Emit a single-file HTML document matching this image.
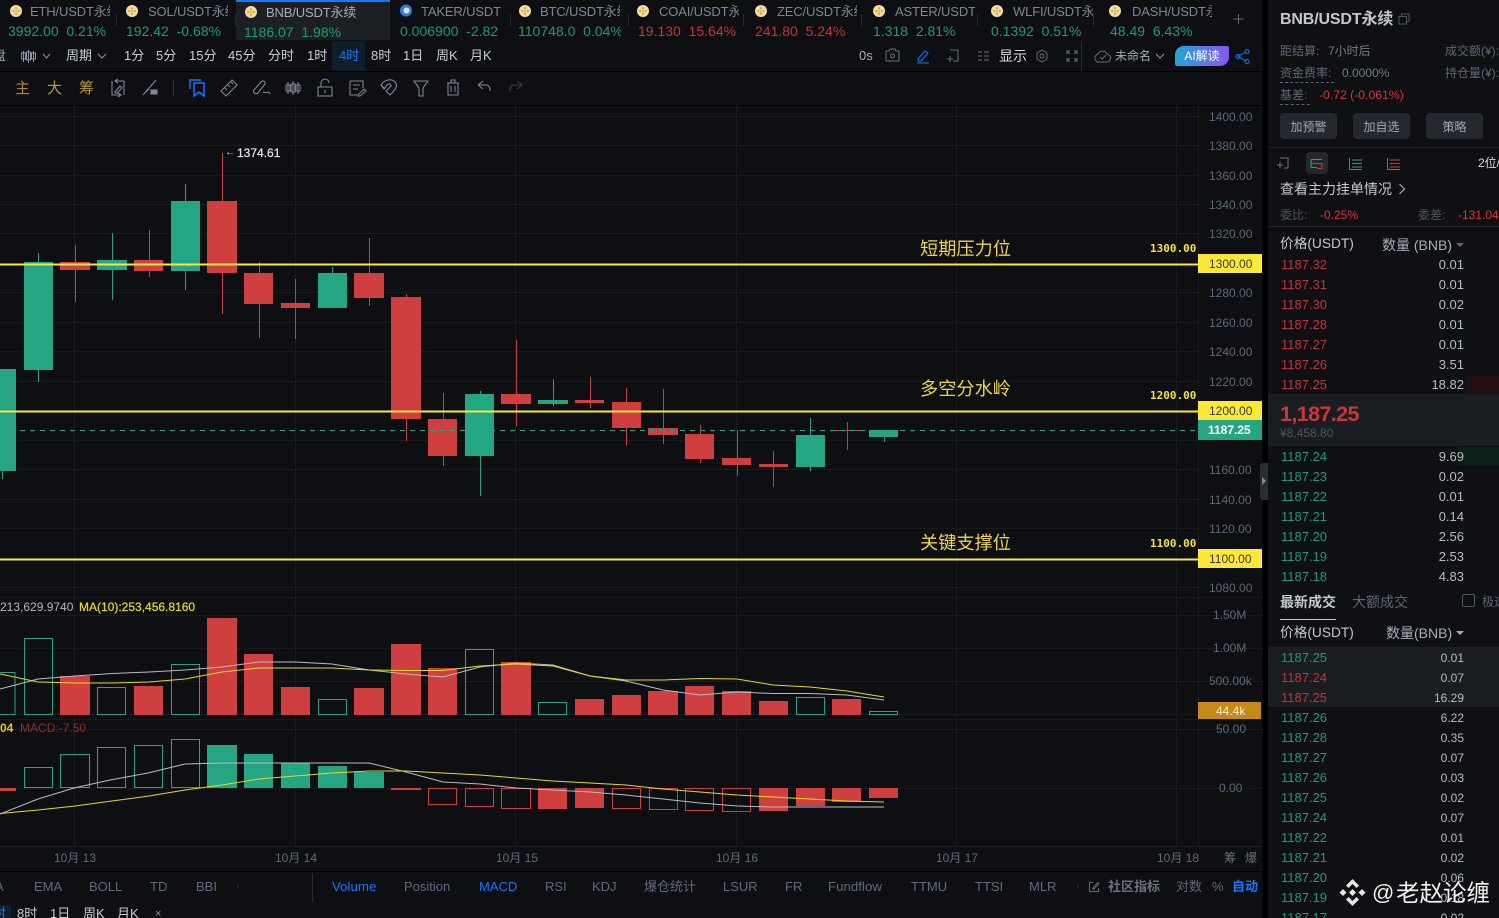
<!DOCTYPE html>
<html><head><meta charset="utf-8"><style>
html,body{margin:0;padding:0;background:#0d0f12;width:1499px;height:918px;overflow:hidden}
body{position:relative;font-family:"Liberation Sans","Noto Sans CJK SC",sans-serif;font-size:13px;color:#8a94a3}
.a{position:absolute}
.t{position:absolute;white-space:nowrap;line-height:20px;height:20px}
.c{overflow:hidden}
.g{color:#1d9a76}.r{color:#c0353a}.b{color:#1677ff}.w{color:#c9ced6}
.n{color:#8c96a6}
.v{font-size:14px}
.k{letter-spacing:-.15px}
.ax{position:absolute;left:1209px;color:#5d6778;font-size:12px;line-height:16px;white-space:nowrap}
.as div,.bi div,.tr div{position:absolute;left:1281px;font-size:13px;line-height:20px;white-space:nowrap}
.as b,.bi b,.tr b{position:absolute;font-weight:400;right:35px;font-size:13px;line-height:20px;color:#b5bcc6}
.tl{color:#5f6a7b;font-size:13px}
.lb{position:absolute;left:1198px;width:64px;height:19px;background:#fde83a;color:#3a3a30;font-size:12px;line-height:21px;padding-left:11px;box-sizing:border-box;overflow:hidden}
.btn{position:absolute;top:113px;width:57px;height:26px;background:#25282e;border-radius:4px;color:#a2a9b4;font-size:12px;line-height:28px;text-align:center}
.mono{position:absolute;left:1150px;white-space:nowrap;font:700 11px/20px "DejaVu Sans Mono",monospace;color:#f3e23c}
.note{position:absolute;left:920px;white-space:nowrap;font-size:18.200px;line-height:24px;height:24px;color:#f0d43c}
</style></head><body>
<svg width="0" height="0" style="position:absolute"><defs>
<symbol id="coin" viewBox="0 0 12 12"><circle cx="6" cy="6" r="6" fill="#efdcb0"/><path d="M6 1.800 7.400 3.200 6 4.600 4.600 3.200ZM3.200 4.600 4.600 6 3.200 7.400 1.800 6ZM8.800 4.600 10.200 6 8.800 7.400 7.400 6ZM6 7.400 7.400 8.800 6 10.200 4.600 8.800ZM6 4.900 7.100 6 6 7.100 4.900 6Z" fill="#e8a320"/></symbol>
</defs></svg>

<!-- tab strip -->
<div class="a" style="left:236px;top:0;width:154px;height:40px;background:#1c1f24;border-top:2px solid #1677ff;box-sizing:border-box"></div>
<div class="a" style="left:0;top:71px;width:1263px;height:1px;background:#000"></div>
<div class="a" style="left:0;top:105px;width:1263px;height:1px;background:#000"></div>
<svg class="a" style="left:0;top:0" width="1263" height="42">
<g stroke="#25282d"><path d="M116.500 14V26M235.500 14V26M510.500 14V26M628.500 14V26M743.500 14V26M861.500 14V26M977.500 14V26M1093.500 14V26"/></g>
<use href="#coin" x="10" y="5" width="12" height="12"/><use href="#coin" x="126" y="5" width="12" height="12"/><use href="#coin" x="245" y="6" width="12" height="12"/>
<circle cx="406" cy="10.500" r="6" fill="#2a7de1"/><circle cx="406.500" cy="10.500" r="3" fill="#dfe6ee"/>
<use href="#coin" x="519" y="5" width="12" height="12"/><use href="#coin" x="637" y="5" width="12" height="12"/><use href="#coin" x="755" y="5" width="12" height="12"/><use href="#coin" x="873" y="5" width="12" height="12"/><use href="#coin" x="991" y="5" width="12" height="12"/><use href="#coin" x="1109" y="5" width="12" height="12"/>
<path d="M1233.500 19H1243.500M1238.500 14V24" stroke="#5f6775" stroke-width="1"/>
</svg>
<div class="t c k" style="left:30px;top:2px;width:80px;color:#7d8695">ETH/USDT永续</div>
<div class="t c k" style="left:148px;top:2px;width:80px;color:#7d8695">SOL/USDT永续</div>
<div class="t c k" style="left:266px;top:3px;width:110px;color:#a7aeb9">BNB/USDT永续</div>
<div class="t c k" style="left:421px;top:2px;width:82px;color:#7d8695">TAKER/USDT</div>
<div class="t c k" style="left:540px;top:2px;width:80px;color:#7d8695">BTC/USDT永续</div>
<div class="t c k" style="left:659px;top:2px;width:80px;color:#7d8695">COAI/USDT永续</div>
<div class="t c k" style="left:777px;top:2px;width:80px;color:#7d8695">ZEC/USDT永续</div>
<div class="t c k" style="left:895px;top:2px;width:80px;color:#7d8695">ASTER/USDT</div>
<div class="t c k" style="left:1013px;top:2px;width:80px;color:#7d8695">WLFI/USDT永续</div>
<div class="t c k" style="left:1132px;top:2px;width:80px;color:#7d8695">DASH/USDT永续</div>
<div class="t c g v" style="left:8px;top:21px;width:104px">3992.00&nbsp; 0.21%</div>
<div class="t c g v" style="left:126px;top:21px;width:104px">192.42&nbsp; -0.68%</div>
<div class="t c g v" style="left:244px;top:22px;width:120px">1186.07&nbsp; 1.98%</div>
<div class="t c g v" style="left:400px;top:21px;width:104px">0.006900&nbsp; -2.82</div>
<div class="t c g v" style="left:518px;top:21px;width:103px">110748.0&nbsp; 0.04%</div>
<div class="t c r v" style="left:638px;top:21px;width:104px">19.130&nbsp; 15.64%</div>
<div class="t c r v" style="left:755px;top:21px;width:104px">241.80&nbsp; 5.24%</div>
<div class="t c g v" style="left:873px;top:21px;width:104px">1.318&nbsp; 2.81%</div>
<div class="t c g v" style="left:991px;top:21px;width:104px">0.1392&nbsp; 0.51%</div>
<div class="t c g v" style="left:1110px;top:21px;width:104px">48.49&nbsp; 6.43%</div>

<!-- row 2 -->
<div class="a" style="left:332px;top:41px;width:33px;height:30px;background:#0f1e2c"></div>
<div class="t" style="left:-7px;top:46px;color:#9aa3b0">盘</div>
<div class="t w" style="left:66px;top:46px">周期</div>
<div class="t w" style="left:124px;top:46px">1分</div>
<div class="t w" style="left:156px;top:46px">5分</div>
<div class="t w" style="left:189px;top:46px">15分</div>
<div class="t w" style="left:228px;top:46px">45分</div>
<div class="t w" style="left:268px;top:46px">分时</div>
<div class="t w" style="left:307px;top:46px">1时</div>
<div class="t b" style="left:339px;top:46px">4时</div>
<div class="t w" style="left:371px;top:46px">8时</div>
<div class="t w" style="left:403px;top:46px">1日</div>
<div class="t w" style="left:436px;top:46px">周K</div>
<div class="t w" style="left:470px;top:46px">月K</div>
<div class="t" style="left:859px;top:46px;color:#a7aeb9">0s</div>
<div class="t" style="left:999px;top:46px;color:#d8dce2;font-size:14px">显示</div>
<div class="t" style="left:1115px;top:46px;font-size:12px;color:#a7aeb9">未命名</div>
<div class="a" style="left:1081px;top:41px;width:1px;height:30px;background:#2a2d33"></div>
<div class="a" style="left:1175px;top:46px;width:54px;height:20px;border-radius:9px 2px 9px 2px;background:linear-gradient(90deg,#1ea7d8,#8a56ef);color:#fff;font-size:12px;line-height:20px;text-align:center">AI解读</div>
<svg class="a" style="left:0;top:41px" width="1263" height="31" fill="none" stroke="#656e7c" stroke-width="1">
<path stroke="#8a94a3" d="M23.500 10V21M21.500 12H25.500V18H21.500ZM28.500 9V22M26.500 11H30.500V19H26.500ZM33.500 10V21M31.500 12H35.500V18H31.500Z"/>
<path stroke="#8a94a3" d="M43 13 46.500 17 50 13M98 13 102 17 106 13M1156 13 1160 17 1164 13"/>
<path d="M886 10H889L890 8H895L896 10H899V20H886ZM890.500 15A2 2 0 1 0 894.500 15A2 2 0 1 0 890.500 15Z"/>
<path stroke="#1677ff" d="M918 18 925 10 928 12 921 20H918ZM917 22H929"/>
<path d="M950 9H958V20H953M947 18H953M950 15V21"/>
<path d="M978 11H982M978 15H982M978 19H982M984 11H989M984 15H989M984 19H989"/>
<path d="M1042 9 1047 12V18L1042 21 1037 18V12ZM1040 15A2 2 0 1 0 1044 15A2 2 0 1 0 1040 15Z"/>
<path d="M1067 13V10H1070M1074 10H1077V13M1077 17V20H1074M1070 20H1067V17M1067 10 1070 13M1077 10 1074 13M1077 20 1074 17M1067 20 1070 17"/>
<path d="M1100 21H1106A4 4 0 0 0 1107 13 5 5 0 0 0 1098 13 4 4 0 0 0 1100 21ZM1100 16 1102 18 1106 14"/>
<path stroke="#1677ff" d="M1238 15.500 1246 11M1238 15.500 1246 20"/><circle cx="1238" cy="15.500" r="2" stroke="#1677ff"/><circle cx="1247" cy="10.500" r="2" stroke="#1677ff"/><circle cx="1247" cy="20.500" r="2" stroke="#1677ff"/>
</svg>

<!-- row 3 -->
<div class="t" style="left:15px;top:79px;font-size:15px;color:#b0892a">主</div>
<div class="t" style="left:47px;top:79px;font-size:15px;color:#c09a3c">大</div>
<div class="t" style="left:79px;top:79px;font-size:15px;color:#b89834">筹</div>
<svg class="a" style="left:0;top:72px" width="540" height="33" fill="none" stroke="#7e8796" stroke-width="1.100">
<path d="M115 9H124V23M121 23H112V9M118 7 115 9 118 11M118 25 121 23 118 21M115 20 120 14 122 16 117 21H115Z"/>
<path d="M143 23 156 8M146 20 149 17"/><path d="M151 18H157V22H151Z" fill="#7e8796"/>
<path d="M173.500 8V24" stroke="#2a2d33"/>
<path stroke="#1677ff" stroke-width="1.500" d="M190 17V8H201M194 11H204V24L199 20 194 24Z"/>
<path d="M221 19 232 8 237 13 226 24ZM225 16 227 18M228 13 230 15M231 10 233 12"/>
<path d="M254 18 261 10C263 8 266 10 265 12L258 21C256 23 252 20 254 18ZM263 20C266 22 268 18 270 22"/>
<path d="M288 10V22M286 13H290V19H286ZM293 9V23M291 12H295V20H291ZM298 10V22M296 13H300V19H296Z"/>
<path d="M318 15H332V24H318ZM321 15V11A4 4 0 0 1 329 11M325 18V21"/>
<path d="M350 9H363V16M350 9V23H357M353 13H360M353 17H358M358 23 364 17 366 19 360 24H358Z"/>
<path d="M381 13C384 8 391 6 395 10S394 19 390 23L386 19 391 14C391 12 389 11 387 13L384 17ZM381 13 385 17"/>
<path d="M414 9H428L423 16V24H419V16Z"/>
<path d="M447 11H459M451 11V8H455V11M448 11V23H458V11M451 14V20M455 14V20"/>
<path d="M478 13 483 9M478 13 483 17M478 13H486C489 13 490 16 490 19"/>
<path stroke="#3a3e45" d="M522 13 517 9M522 13 517 17M522 13H514C511 13 510 16 510 19"/>
</svg>

<!-- main chart -->
<svg class="a" style="left:0;top:0" width="1263" height="872">
<g stroke="#191b1f" stroke-width="1">
<path d="M0 116.500H1198M0 145.500H1198M0 175.500H1198M0 204.500H1198M0 233.500H1198M0 292.500H1198M0 322.500H1198M0 351.500H1198M0 381.500H1198M0 440.500H1198M0 469.500H1198M0 499.500H1198M0 528.500H1198M0 587.500H1198"/>
<path d="M0 615.500H1262M0 648.500H1262M0 681.500H1262M0 714.500H1262M0 729.500H1262M0 788.500H1262"/>
<path d="M74.500 105V846M295.500 105V846M515.500 105V846M736.500 105V846M956.500 105V846M1176.500 105V846M1198.500 105V846"/>
</g>
<path d="M0 597.500H1262M0 719.500H1262" stroke="#17191d"/>
<path d="M0 846.500H1262" stroke="#1c1f24"/>
<g stroke-width="1">
<g stroke="#26a584" fill="#26a584">
<path d="M2.500 369V479M38.500 253V382M112.500 233V300M185.500 184V290M332.500 267V308M480.500 391V496M553.500 379V406M810.500 418V471M884.500 430V442"/>
</g>
<path d="M75.500 245V302M149.500 230V277M222.500 153V314M259.500 262V338M295.500 279V339M369.500 238V306M406.500 294V441M443.500 393V466M516.500 340V426M590.500 377V408M626.500 388V446M663.500 389V444M700.500 425V463M737.500 430V476M773.500 451V487M847.500 422V450" stroke="#c9403f"/>
</g>
<g fill="#26a584">
<rect x="-12" y="369" width="28" height="102"/><rect x="24" y="262" width="29" height="108"/><rect x="97" y="260" width="30" height="10"/><rect x="171" y="201" width="29" height="70"/><rect x="318" y="273" width="29" height="35"/><rect x="465" y="394" width="29" height="62"/><rect x="538" y="400" width="30" height="4"/><rect x="796" y="435" width="29" height="32"/><rect x="869" y="430" width="29" height="7"/>
</g>
<g fill="#cf3f3f">
<rect x="60" y="262" width="30" height="8"/><rect x="134" y="260" width="29" height="11"/><rect x="207" y="201" width="30" height="72"/><rect x="244" y="273" width="29" height="31"/><rect x="281" y="303" width="29" height="5"/><rect x="354" y="273" width="30" height="25"/><rect x="391" y="297" width="30" height="122"/><rect x="428" y="419" width="29" height="37"/><rect x="501" y="394" width="30" height="10"/><rect x="575" y="400" width="29" height="3"/><rect x="612" y="402" width="29" height="26"/><rect x="648" y="428" width="30" height="7"/><rect x="685" y="434" width="29" height="25"/><rect x="722" y="458" width="29" height="7"/><rect x="759" y="464" width="29" height="3"/><rect x="832" y="430" width="29" height="1"/>
</g>
<path d="M0 430.500H1198" stroke="#26a584" stroke-dasharray="5 5"/>
<path d="M0 264.500H1198M0 411.500H1198M0 559.500H1198" stroke="#f6e648" stroke-width="2"/>
<g fill="none" stroke="#26a584" stroke-width="1">
<rect x="-10" y="672.500" width="25" height="42"/><rect x="24.500" y="638.500" width="28" height="76"/><rect x="97.500" y="687.500" width="28" height="27"/><rect x="171.500" y="664.500" width="28" height="50"/><rect x="318.500" y="699.500" width="28" height="15"/><rect x="465.500" y="649.500" width="28" height="65"/><rect x="538.500" y="702.500" width="28" height="12"/><rect x="796.500" y="697.500" width="28" height="17"/><rect x="869.500" y="711.500" width="28" height="3"/>
</g>
<g fill="#cf3f3f">
<rect x="60" y="676" width="30" height="39"/><rect x="134" y="686" width="29" height="29"/><rect x="207" y="618" width="30" height="97"/><rect x="244" y="654" width="29" height="61"/><rect x="281" y="687" width="29" height="28"/><rect x="354" y="688" width="30" height="27"/><rect x="391" y="644" width="30" height="71"/><rect x="428" y="668" width="29" height="47"/><rect x="501" y="662" width="30" height="53"/><rect x="575" y="699" width="29" height="16"/><rect x="612" y="695" width="29" height="20"/><rect x="648" y="691" width="30" height="24"/><rect x="685" y="686" width="29" height="29"/><rect x="722" y="691" width="29" height="24"/><rect x="759" y="701" width="29" height="14"/><rect x="832" y="699" width="29" height="16"/>
</g>
<polyline fill="none" stroke="#b9bcc2" stroke-width="1" points="0,689 38,679 75,676 112,673.500 149,672 185,670 222,667 259,662 295,662 332,664 369,670 406,674 443,677 480,667 516,663 553,665 590,676 626,681 663,690 700,695 737,692 773,693.500 810,693.500 847,695 884,700"/>
<polyline fill="none" stroke="#e8d820" stroke-width="1" points="0,674 38,682 75,683 112,683 149,682 185,679 222,672 259,668 295,668 332,668 369,670 406,670.500 443,670.500 480,666 516,664 553,666 590,676 626,680 663,680 700,678.500 737,679 773,685 810,687 847,691 884,697"/>
<rect x="-10" y="788" width="26" height="3" fill="#cf3f3f"/>
<g fill="none" stroke="#26a584">
<rect x="24.500" y="767.500" width="28" height="20"/><rect x="60.500" y="754.500" width="29" height="33"/><rect x="97.500" y="747.500" width="28" height="40"/><rect x="134.500" y="745.500" width="28" height="42"/><rect x="171.500" y="739.500" width="28" height="48"/>
</g>
<g fill="#26a584">
<rect x="207" y="745" width="30" height="43"/><rect x="244" y="754" width="29" height="34"/><rect x="281" y="763" width="29" height="25"/><rect x="318" y="766" width="29" height="22"/><rect x="354" y="772" width="30" height="16"/>
</g>
<g fill="none" stroke="#cf3f3f">
<rect x="428.500" y="788.500" width="28" height="16"/><rect x="465.500" y="788.500" width="28" height="18"/><rect x="501.500" y="788.500" width="29" height="20"/><rect x="612.500" y="788.500" width="28" height="20"/><rect x="649.500" y="788.500" width="28" height="21"/><rect x="685.500" y="788.500" width="28" height="22"/><rect x="722.500" y="788.500" width="28" height="23"/>
</g>
<g fill="#cf3f3f">
<rect x="391" y="788" width="30" height="2"/><rect x="538" y="788" width="29" height="21"/><rect x="575" y="788" width="29" height="20"/><rect x="759" y="788" width="29" height="23"/><rect x="796" y="788" width="29" height="18"/><rect x="832" y="788" width="29" height="14"/><rect x="869" y="788" width="29" height="10"/>
</g>
<polyline fill="none" stroke="#b9bcc2" points="0,814 38,799 74,788 110,780 148,773 185,764 222,763 259,763 295,763 332,763 369,763 406,772 443,782 480,784 516,788 553,790 590,792 626,795 663,799 700,803 737,806 773,807 810,807 847,807 884,807"/>
<polyline fill="none" stroke="#e8d820" points="0,813.500 38,810 75,806 112,801 149,796 185,790 222,785 259,779 295,776 332,773 369,771 406,771 443,773 480,775 516,778 553,781 590,783 626,785 663,789 700,792 737,795 773,797 810,799 847,801 884,802"/>
</svg>

<div class="note" style="top:237px">短期压力位</div>
<div class="note" style="top:377px">多空分水岭</div>
<div class="note" style="top:531px">关键支撑位</div>
<div class="mono" style="top:239px">1300.00</div>
<div class="mono" style="top:386px">1200.00</div>
<div class="mono" style="top:534px">1100.00</div>
<div class="t" style="left:225px;top:143px;font-size:10px;color:#d7dae0">←</div>
<div class="t" style="left:237px;top:143px;font-size:12px;color:#e2e5ea;-webkit-text-stroke:.25px #e2e5ea">1374.61</div>

<!-- price axis -->
<div class="ax" style="top:109px">1400.00</div><div class="ax" style="top:138px">1380.00</div><div class="ax" style="top:168px">1360.00</div><div class="ax" style="top:197px">1340.00</div><div class="ax" style="top:226px">1320.00</div><div class="ax" style="top:285px">1280.00</div><div class="ax" style="top:315px">1260.00</div><div class="ax" style="top:344px">1240.00</div><div class="ax" style="top:374px">1220.00</div><div class="ax" style="top:462px">1160.00</div><div class="ax" style="top:492px">1140.00</div><div class="ax" style="top:521px">1120.00</div><div class="ax" style="top:580px">1080.00</div>
<div class="ax" style="left:1213px;top:607px">1.50M</div><div class="ax" style="left:1213px;top:640px">1.00M</div><div class="ax" style="left:1209px;top:673px">500.00k</div><div class="ax" style="left:1216px;top:721px">50.00</div><div class="ax" style="left:1219px;top:780px">0.00</div>
<div class="lb" style="top:254px">1300.00</div>
<div class="lb" style="top:401px">1200.00</div>
<div class="lb" style="top:549px">1100.00</div>
<div class="a" style="left:1198px;top:420px;width:64px;height:20px;background:#26a584;color:#fff;font-size:12px;font-weight:700;line-height:20px;padding-left:10px;box-sizing:border-box">1187.25</div>
<div class="a" style="left:1198px;top:702px;width:63px;height:17px;background:#c88a16;color:#f5f0dc;font-size:12px;line-height:18px;padding-left:18px;box-sizing:border-box">44.4k</div>

<div class="t" style="left:0;top:597px;font-size:12px;color:#b3b8c0">213,629.9740</div>
<div class="t" style="left:79px;top:597px;font-size:12px;color:#e6d61e;-webkit-text-stroke:.25px #e6d61e">MA(10):253,456.8160</div>
<div class="t" style="left:0;top:718px;font-size:12px"><span style="color:#e6c81e;font-weight:700">04</span>&nbsp; <span style="color:#8c2f2f">MACD:-7.50</span></div>

<!-- x axis -->
<div class="t tl" style="left:54px;top:848px;font-size:12px">10月 13</div>
<div class="t tl" style="left:275px;top:848px;font-size:12px">10月 14</div>
<div class="t tl" style="left:496px;top:848px;font-size:12px">10月 15</div>
<div class="t tl" style="left:716px;top:848px;font-size:12px">10月 16</div>
<div class="t tl" style="left:936px;top:848px;font-size:12px">10月 17</div>
<div class="t tl" style="left:1157px;top:848px;font-size:12px">10月 18</div>
<div class="t" style="left:1224px;top:848px;font-size:12px;color:#666f7c">筹</div>
<div class="t" style="left:1245px;top:848px;font-size:12px;color:#666f7c">爆</div>

<!-- indicator row -->
<div class="a" style="left:0;top:871px;width:1263px;height:1px;background:#000"></div>
<div class="a" style="left:312px;top:873px;width:1px;height:29px;background:#2a2d33"></div>
<div class="t tl" style="left:-5px;top:877px">A</div><div class="t tl" style="left:34px;top:877px">EMA</div><div class="t tl" style="left:89px;top:877px">BOLL</div><div class="t tl" style="left:150px;top:877px">TD</div><div class="t tl" style="left:196px;top:877px">BBI</div><div class="t" style="left:236px;top:877px;color:#3a3e45;font-size:10px">›</div>
<div class="t b" style="left:332px;top:877px;font-size:13.300px">Volume</div><div class="t tl" style="left:404px;top:877px">Position</div><div class="t b" style="left:479px;top:877px">MACD</div><div class="t tl" style="left:545px;top:877px">RSI</div><div class="t tl" style="left:592px;top:877px">KDJ</div><div class="t tl" style="left:644px;top:877px">爆仓统计</div><div class="t tl" style="left:723px;top:877px">LSUR</div><div class="t tl" style="left:785px;top:877px">FR</div><div class="t tl" style="left:828px;top:877px;font-size:13.300px">Fundflow</div><div class="t tl" style="left:911px;top:877px">TTMU</div><div class="t tl" style="left:975px;top:877px">TTSI</div><div class="t tl" style="left:1029px;top:877px">MLR</div><div class="t" style="left:1076px;top:877px;color:#3a3e45;font-size:10px">›</div>
<svg class="a" style="left:1088px;top:881px" width="12" height="12" fill="none" stroke="#5f6a7b"><path d="M5 1.500H1.500V10.500H10.500V7M4.500 7.500 10 1.500 11 2.500 5.500 8.500Z"/></svg>
<div class="t" style="left:1108px;top:877px;color:#68727f;font-weight:700;font-size:13px">社区指标</div>
<div class="t tl" style="left:1176px;top:877px">对数</div><div class="t tl" style="left:1212px;top:877px">%</div><div class="t b" style="left:1232px;top:877px;font-weight:700;font-size:13px">自动</div>
<div class="a" style="left:0;top:905px;width:11px;height:13px;background:#0f1e2c"></div>
<div class="t b" style="left:-7px;top:904px;font-size:13px">时</div>
<div class="t w" style="left:17px;top:904px">8时</div><div class="t w" style="left:50px;top:904px">1日</div><div class="t w" style="left:83px;top:904px">周K</div><div class="t w" style="left:117px;top:904px">月K</div><div class="t n" style="left:155px;top:904px;font-size:11px">×</div>

<!-- divider + panel -->
<div class="a" style="left:1263px;top:0;width:5px;height:918px;background:#000"></div>
<div class="a" style="left:1260px;top:463px;width:8px;height:37px;background:#2a2d33;border-radius:3px 0 0 3px"></div>
<svg class="a" style="left:1261px;top:476px" width="6" height="10"><path d="M1 1 5 5 1 9Z" fill="#7e8796"/></svg>
<div class="a" style="left:1268px;top:0;width:231px;height:918px;background:#0e1013"></div>
<div class="t" style="left:1280px;top:10px;font-size:16px;font-weight:700;color:#c3c8d0;letter-spacing:-.15px">BNB/USDT永续</div>
<svg class="a" style="left:1398px;top:13px" width="12" height="12" fill="none" stroke="#4c525c"><path d="M1 3.500H8.500V11H1ZM3.500 3V1H11V8.500H9"/></svg>
<div class="t" style="left:1280px;top:41px;font-size:12px;color:#5f6775">距结算:</div>
<div class="t" style="left:1328px;top:41px;font-size:12px;color:#6f7987">7小时后</div>
<div class="t" style="left:1445px;top:41px;font-size:12px;color:#5f6775">成交额(¥):</div>
<div class="t" style="left:1280px;top:63px;font-size:12px;color:#5f6775">资金费率:</div>
<div class="t" style="left:1342px;top:63px;font-size:12px;color:#6f7987">0.0000%</div>
<div class="t" style="left:1445px;top:63px;font-size:12px;color:#5f6775">持仓量(¥):</div>
<div class="a" style="left:1280px;top:82px;width:54px;border-top:1px dashed #5f6775"></div>
<div class="t" style="left:1280px;top:85px;font-size:12px;color:#5f6775">基差:</div>
<div class="t" style="left:1319px;top:85px;font-size:12.200px;color:#d8343a">-0.72 (-0.061%)</div>
<div class="a" style="left:1280px;top:104px;width:30px;border-top:1px dashed #5f6775"></div>
<div class="btn" style="left:1280px">加预警</div>
<div class="btn" style="left:1353px">加自选</div>
<div class="btn" style="left:1426px">策略</div>
<div class="a" style="left:1268px;top:147px;width:231px;height:1px;background:#24272c"></div>
<div class="a" style="left:1306px;top:152px;width:22px;height:22px;background:#25282e;border-radius:4px"></div>
<svg class="a" style="left:1268px;top:152px" width="140" height="22" fill="none" stroke-width="1">
<path stroke="#6b7280" d="M12 6H20V16H16M9 13H15M12 10V16"/>
<path stroke="#26a584" d="M43 7.500H54M43 15.500H49M43 7.500V15.500"/><path stroke="#d8343a" d="M43 11.500H54M49 16.500H54V11.500"/>
<path stroke="#6b7280" d="M81.500 6V17.500H94"/><path stroke="#26a584" d="M84 8H94M84 11.500H94M84 15H94"/>
<path stroke="#6b7280" d="M119.500 6V17.500H132"/><path stroke="#d8343a" d="M122 8H132M122 11.500H132M122 15H132"/>
</svg>
<div class="t" style="left:1478px;top:153px;font-size:12px;color:#d7dae0">2位/</div>
<div class="t" style="left:1280px;top:179px;font-size:14px;color:#c3c8d0">查看主力挂单情况</div>
<svg class="a" style="left:1398px;top:183px" width="8" height="12" fill="none" stroke="#a2a9b4" stroke-width="1.200"><path d="M1.500 1 6.500 6 1.500 11"/></svg>
<div class="t" style="left:1280px;top:205px;font-size:12px;color:#4f5560">委比:</div>
<div class="t" style="left:1320px;top:205px;font-size:12px;color:#d8343a">-0.25%</div>
<div class="t" style="left:1418px;top:205px;font-size:12px;color:#4f5560">委差:</div>
<div class="t" style="left:1458px;top:205px;font-size:12px;color:#d8343a">-131.04</div>
<div class="a" style="left:1268px;top:226px;width:231px;height:1px;background:#24272c"></div>
<div class="t" style="left:1280px;top:234px;font-size:13.700px;color:#c3c8d0">价格(USDT)</div>
<div class="t" style="left:1382px;top:235px;font-size:14px;color:#a7aeb9">数量 (BNB)</div>
<svg class="a" style="left:1456px;top:243px" width="8" height="5"><path d="M0 0H8L4 4Z" fill="#5f6775"/></svg>

<!-- asks -->
<div class="a" style="left:1465px;top:376px;width:34px;height:18px;background:#221112"></div>
<div class="as">
<div class="r" style="top:255px">1187.32</div><b style="top:255px">0.01</b>
<div class="r" style="top:275px">1187.31</div><b style="top:275px">0.01</b>
<div class="r" style="top:295px">1187.30</div><b style="top:295px">0.02</b>
<div class="r" style="top:315px">1187.28</div><b style="top:315px">0.01</b>
<div class="r" style="top:335px">1187.27</div><b style="top:335px">0.01</b>
<div class="r" style="top:355px">1187.26</div><b style="top:355px">3.51</b>
<div class="r" style="top:375px">1187.25</div><b style="top:375px">18.82</b>
</div>
<div class="a" style="left:1268px;top:394px;width:231px;height:52px;background:#1a1e22"></div>
<div class="t" style="left:1280px;top:401px;font-size:21.500px;line-height:26px;height:26px;font-weight:700;color:#c9373a;letter-spacing:-.6px">1,187.25</div>
<div class="t" style="left:1280px;top:423px;font-size:12px;color:#4f5560">¥8,458.80</div>
<div class="a" style="left:1458px;top:447px;width:41px;height:18px;background:#0c2019"></div>
<div class="bi">
<div class="g" style="top:447px">1187.24</div><b style="top:447px">9.69</b>
<div class="g" style="top:467px">1187.23</div><b style="top:467px">0.02</b>
<div class="g" style="top:487px">1187.22</div><b style="top:487px">0.01</b>
<div class="g" style="top:507px">1187.21</div><b style="top:507px">0.14</b>
<div class="g" style="top:527px">1187.20</div><b style="top:527px">2.56</b>
<div class="g" style="top:547px">1187.19</div><b style="top:547px">2.53</b>
<div class="g" style="top:567px">1187.18</div><b style="top:567px">4.83</b>
</div>
<div class="t" style="left:1280px;top:592px;font-size:14px;font-weight:700;color:#c3c8d0">最新成交</div>
<div class="t" style="left:1352px;top:592px;font-size:14px;color:#5f6775">大额成交</div>
<div class="a" style="left:1462px;top:594px;width:13px;height:13px;border:1px solid #4f5560;border-radius:2px;box-sizing:border-box"></div>
<div class="t" style="left:1482px;top:592px;font-size:12px;color:#5f6775">极速</div>
<div class="a" style="left:1280px;top:619px;width:56px;height:1px;background:#c3c8d0"></div>
<div class="t" style="left:1280px;top:623px;font-size:13.700px;color:#c3c8d0">价格(USDT)</div>
<div class="t" style="left:1386px;top:623px;font-size:14px;color:#a7aeb9">数量(BNB)</div>
<svg class="a" style="left:1456px;top:631px" width="8" height="5"><path d="M0 0H8L4 4Z" fill="#a7aeb9"/></svg>
<div class="a" style="left:1268px;top:647px;width:231px;height:60px;background:#1a1d21"></div>
<div class="tr">
<div class="g" style="top:648px">1187.25</div><b style="top:648px;font-size:12px">0.01</b>
<div class="r" style="top:668px">1187.24</div><b style="top:668px;font-size:12px">0.07</b>
<div class="r" style="top:688px">1187.25</div><b style="top:688px;font-size:12px">16.29</b>
<div class="g" style="top:708px">1187.26</div><b style="top:708px;font-size:12px">6.22</b>
<div class="g" style="top:728px">1187.28</div><b style="top:728px;font-size:12px">0.35</b>
<div class="g" style="top:748px">1187.27</div><b style="top:748px;font-size:12px">0.07</b>
<div class="g" style="top:768px">1187.26</div><b style="top:768px;font-size:12px">0.03</b>
<div class="g" style="top:788px">1187.25</div><b style="top:788px;font-size:12px">0.02</b>
<div class="g" style="top:808px">1187.24</div><b style="top:808px;font-size:12px">0.07</b>
<div class="g" style="top:828px">1187.22</div><b style="top:828px;font-size:12px">0.01</b>
<div class="g" style="top:848px">1187.21</div><b style="top:848px;font-size:12px">0.02</b>
<div class="g" style="top:868px">1187.20</div><b style="top:868px;font-size:12px">0.06</b>
<div class="g" style="top:888px">1187.19</div><b style="top:888px;font-size:12px">0.18</b>
<div class="g" style="top:908px">1187.17</div><b style="top:908px;font-size:12px">0.02</b>
</div>

<!-- watermark -->
<svg class="a" style="left:1338px;top:878px" width="29" height="29" fill="#e6e6e6"><path d="M14.500 1 21 7.500 18.500 10 14.500 6 10.500 10 8 7.500ZM5 11 8.500 14.500 5 18 1.500 14.500ZM24 11 27.500 14.500 24 18 20.500 14.500ZM14.500 11 18 14.500 14.500 18 11 14.500ZM8 21.500 10.500 19 14.500 23 18.500 19 21 21.500 14.500 28Z"/></svg>
<div class="t" style="left:1372px;top:878px;font-size:22px;line-height:30px;height:30px;color:#f2f2f2">@</div>
<div class="t" style="left:1396px;top:878px;font-size:23.500px;line-height:30px;height:30px;color:#f2f2f2">老赵论缠</div>
</body></html>
